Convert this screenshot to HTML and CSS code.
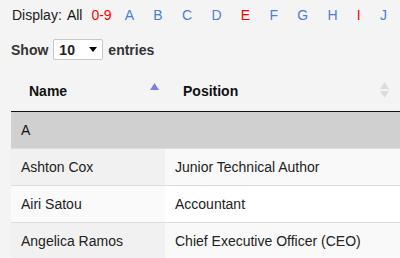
FILE: index.html
```html
<!DOCTYPE html>
<html lang="en">

<head>
  <meta charset="UTF-8">
  <title>Employees</title>
  <link rel="stylesheet" href="styles.css">
</head>

<body>
  <div class="page">
    <div class="alphabet">
      <span class="alphabet-label">Display:</span>
      <span class="alpha alpha-all">All</span>
      <span class="alpha alpha-num empty">0-9</span>
      <span class="alpha">A</span>
      <span class="alpha">B</span>
      <span class="alpha">C</span>
      <span class="alpha">D</span>
      <span class="alpha empty">E</span>
      <span class="alpha">F</span>
      <span class="alpha">G</span>
      <span class="alpha">H</span>
      <span class="alpha empty">I</span>
      <span class="alpha">J</span>
    </div>

    <div class="length">
      Show
      <span class="select">
        <span class="select-value">10</span>
        <svg class="select-arrow" width="8" height="5" viewBox="0 0 8 5"><path d="M0 0h8L4 5z" fill="#000"/></svg>
      </span>
      entries
    </div>

    <table class="grid">
      <thead>
        <tr>
          <th class="col-name sorted">Name
            <svg class="sort-icon" width="9" height="7" viewBox="0 0 9 7"><path d="M4.5 0L9 7H0z" fill="#7d80df"/></svg>
          </th>
          <th class="col-pos">Position
            <svg class="sort-icon both" width="9" height="16" viewBox="0 0 9 16"><path d="M4.5 0L9 7H0z" fill="#dcdcdc"/><path d="M0 9h9L4.5 16z" fill="#dcdcdc"/></svg>
          </th>
        </tr>
      </thead>
      <tbody>
        <tr class="group">
          <td colspan="2">A</td>
        </tr>
        <tr class="odd">
          <td class="sorting-col">Ashton Cox</td>
          <td>Junior Technical Author</td>
        </tr>
        <tr class="even">
          <td class="sorting-col">Airi Satou</td>
          <td>Accountant</td>
        </tr>
        <tr class="odd">
          <td class="sorting-col">Angelica Ramos</td>
          <td>Chief Executive Officer (CEO)</td>
        </tr>
      </tbody>
    </table>
  </div>
</body>

</html>
```

FILE: styles.css
```css
* {
  margin: 0;
  padding: 0;
  box-sizing: border-box;
}

body {
  background: #f4f4f4;
  font-family: "Liberation Sans", Arial, sans-serif;
  font-size: 14px;
  color: #333;
  overflow: hidden;
}

.page {
  padding-left: 11px;
}

/* letter filter */
.alphabet {
  padding-top: 7px;
  line-height: 16px;
  white-space: nowrap;
}

.alphabet-label {
  color: #222;
  margin-left: 1px;
  margin-right: 2px;
}

.alpha {
  color: #4a7ed8;
  margin-right: 15.4px;
}

.alpha-all {
  color: #111;
  margin-right: 5px;
}

.alpha-num {
  margin-right: 10px;
}

.alpha.empty {
  color: #f00;
}

/* page length */
.length {
  margin-top: 16px;
  display: flex;
  align-items: center;
  gap: 5px;
  font-weight: bold;
  line-height: 20px;
  color: #333;
}

.select {
  display: inline-flex;
  align-items: center;
  justify-content: space-between;
  width: 50px;
  height: 21px;
  padding: 0 5px 0 5px;
  background: #fff;
  border: 1px solid #c8c8c8;
  border-radius: 2px;
  color: #222;
}

/* table */
.grid {
  margin-top: 11px;
  width: 389px;
  border-collapse: collapse;
  table-layout: fixed;
}

.grid th {
  position: relative;
  text-align: left;
  font-weight: bold;
  color: #111;
  line-height: 16px;
  padding: 12px 18px;
  border-bottom: 1px solid #111;
}

.grid th.col-name {
  width: 154px;
}

.sort-icon {
  position: absolute;
  right: 6px;
  top: 12px;
}

.sort-icon.both {
  right: 11px;
  top: 11px;
}

.grid td {
  line-height: 16px;
  padding: 10px 10px;
  color: #222;
  border-top: 1px solid #ddd;
}

.grid tr.group td {
  background: #d0d0d0;
  border-top: none;
  color: #111;
}

.grid tr.odd td {
  background: #f9f9f9;
}

.grid tr.odd td.sorting-col {
  background: #f1f1f1;
}

.grid tr.even td {
  background: #fff;
}

.grid tr.even td.sorting-col {
  background: #fafafa;
}
```
